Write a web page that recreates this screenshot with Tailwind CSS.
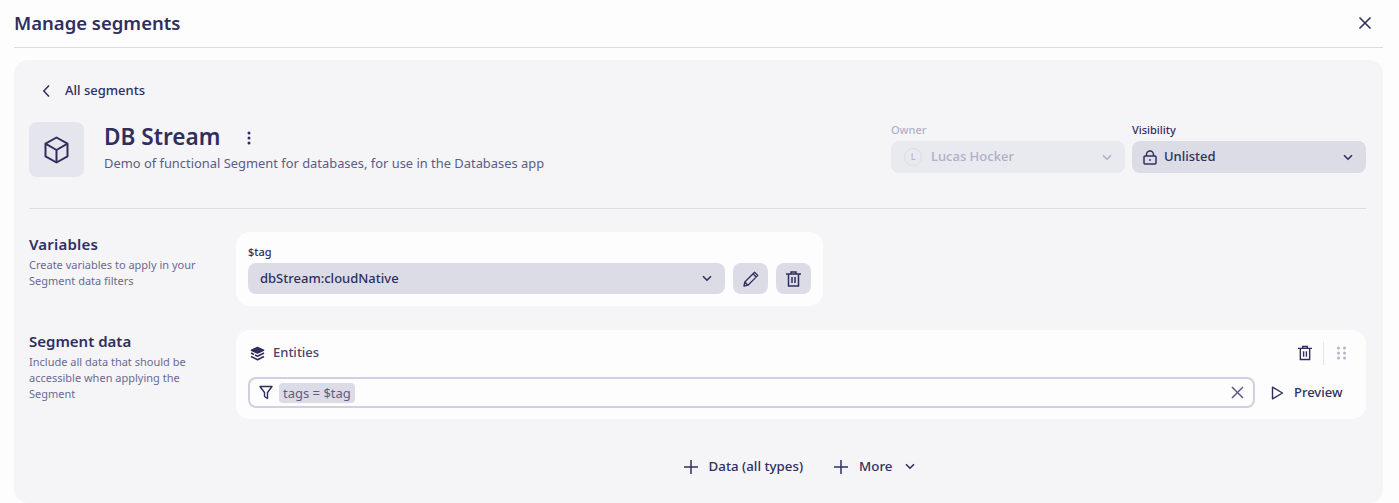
<!DOCTYPE html>
<html lang="en">
<head>
  <meta charset="UTF-8" />
  <title>Manage segments</title>
  <script src="https://cdn.jsdelivr.net/npm/@tailwindcss/browser@4"></script>
</head>
<body class="bg-[#fdfdfe] text-[#2f2f5f] font-['Noto_Sans',sans-serif] h-[503px] w-[1399px] overflow-hidden">

  <!-- Title bar -->
  <header class="mx-[14px] w-[1369px] h-[48px] border-b border-[#dcdce8] flex items-center justify-between">
    <h1 class="text-[18.5px] font-semibold -mt-[1px]">Manage segments</h1>
    <button class="mr-[10px] -mt-[1px]">
      <svg class="w-[16px] h-[16px]" viewBox="0 0 16 16" fill="none" stroke="currentColor" stroke-width="1.6"><path d="M2.5 2.5l11 11M13.5 2.5l-11 11" /></svg>
    </button>
  </header>

  <main class="mt-[12px] mx-[14px] w-[1369px] h-[443px] bg-[#f5f5f8] rounded-[14px] pl-[15px] pr-[17px]">
    <a class="flex items-center gap-[14px] pt-[20px] pl-[13px] h-[42px] text-[13px] font-medium">
      <svg class="w-[9px] h-[14px]" viewBox="0 0 9 14" fill="none" stroke="currentColor" stroke-width="1.5"><path d="M7 1.5L1.8 7L7 12.5" /></svg>
      All segments
    </a>

    <!-- Segment header -->
    <section class="flex justify-between mt-[20px] h-[84px]">
      <div class="flex">
        <div class="w-[55px] h-[55px] rounded-[8px] bg-[#e5e5ed] flex items-center justify-center">
          <svg class="w-[25px] h-[28px]" viewBox="0 0 25 28" fill="none" stroke="currentColor" stroke-width="2" stroke-linejoin="round"><path d="M12.500 1.500l11 6.200v12.600l-11 6.200-11-6.200V7.700z" /><path d="M1.500 7.700l11 6.300 11-6.300M12.500 14v12.500" /></svg>
        </div>
        <div class="ml-[20px]">
          <div class="flex items-center h-[30px]">
            <h2 class="text-[22.6px] font-semibold leading-none">DB Stream</h2>
            <svg class="ml-[27px] mt-[1px] w-[4px] h-[14px]" viewBox="0 0 4 14" fill="currentColor"><circle cx="2" cy="2" r="1.5" /><circle cx="2" cy="7" r="1.5" /><circle cx="2" cy="12" r="1.5" /></svg>
          </div>
          <p class="mt-[2px] text-[12.9px] leading-[18px] text-[#5c5c85]">Demo of functional Segment for databases, for use in the Databases app</p>
        </div>
      </div>

      <div class="flex gap-[7px] pt-[1px]">
        <div class="w-[234px]">
          <div class="text-[11px] leading-[14px] font-medium text-[#b0b0c6]">Owner</div>
          <div class="mt-[4px] h-[32px] rounded-[8px] bg-[#e9e9f0] flex items-center pl-[13px] pr-[13px] text-[#afafc7]">
            <span class="w-[18px] h-[18px] rounded-full border border-[#dcdce6] text-[9px] flex items-center justify-center">L</span>
            <span class="ml-[9px] text-[13px] font-medium">Lucas Hocker</span>
            <svg class="ml-auto w-[10px] h-[7px]" viewBox="0 0 10 7" fill="none" stroke="currentColor" stroke-width="1.6"><path d="M1 1.2l4 4 4-4" /></svg>
          </div>
        </div>
        <div class="w-[234px]">
          <div class="text-[11px] leading-[14px] font-medium">Visibility</div>
          <div class="mt-[4px] h-[32px] rounded-[8px] bg-[#dcdce6] flex items-center pl-[11px] pr-[13px]">
            <svg class="w-[14px] h-[15px]" viewBox="0 0 14 15" fill="none" stroke="currentColor" stroke-width="1.5"><path d="M3.500 6V4.500a3.500 3.500 0 0 1 7 0V6" /><rect x="1" y="6" width="12" height="8" rx="1" /><circle cx="7" cy="10" r="0.9" fill="currentColor" stroke="none" /></svg>
            <span class="ml-[7px] text-[13px] font-medium">Unlisted</span>
            <svg class="ml-auto w-[10px] h-[7px]" viewBox="0 0 10 7" fill="none" stroke="currentColor" stroke-width="1.6"><path d="M1 1.200l4 4 4-4" /></svg>
          </div>
        </div>
      </div>
    </section>

    <div class="mt-[2px] border-t border-[#dcdce8]"></div>

    <!-- Variables -->
    <section class="flex mt-[23px]">
      <div class="w-[207px]">
        <h3 class="text-[15px] tracking-[0.2px] leading-[20px] font-semibold mt-[2px]">Variables</h3>
        <p class="mt-[3px] text-[11px] leading-[16px] text-[#6a6a90]">Create variables to apply in your<br />Segment data filters</p>
      </div>
      <div class="w-[587px] h-[74px] bg-[#fdfdfe] rounded-[14px] px-[12px] pt-[13px]">
        <div class="text-[11px] leading-[14px] font-medium">$tag</div>
        <div class="mt-[4px] flex gap-[8px]">
          <div class="w-[477px] h-[31px] rounded-[8px] bg-[#dcdce6] flex items-center pl-[12px] pr-[13px]">
            <span class="text-[13px] font-medium">dbStream:cloudNative</span>
            <svg class="ml-auto w-[10px] h-[7px]" viewBox="0 0 10 7" fill="none" stroke="currentColor" stroke-width="1.6"><path d="M1 1.200l4 4 4-4" /></svg>
          </div>
          <div class="w-[35px] h-[31px] rounded-[8px] bg-[#dcdce6] flex items-center justify-center">
            <svg class="w-[16px] h-[16px]" viewBox="0 0 16 16" fill="none" stroke="currentColor" stroke-width="1.3" stroke-linejoin="round"><path d="M1 15l.8-4L11.600 1.200l3.200 3.200L5 14.200zM10 2.800l3.200 3.200M1.800 11l3.200 3.200" /></svg>
          </div>
          <div class="w-[35px] h-[31px] rounded-[8px] bg-[#dcdce6] flex items-center justify-center">
            <svg class="w-[15px] h-[16px]" viewBox="0 0 15 16" fill="none" stroke="currentColor" stroke-width="1.5"><path d="M0 3h15M5 3V1h5v2M2.500 3v12h10V3M6 6v6M9 6v6" /></svg>
          </div>
        </div>
      </div>
    </section>

    <!-- Segment data -->
    <section class="flex mt-[24px]">
      <div class="w-[207px]">
        <h3 class="text-[15px] leading-[20px] font-semibold mt-[1px]">Segment data</h3>
        <p class="mt-[3px] text-[11px] leading-[16px] text-[#6a6a90]">Include all data that should be<br />accessible when applying the<br />Segment</p>
      </div>
      <div class="w-[1130px] h-[89px] bg-[#fdfdfe] rounded-[14px] pl-[12px] pr-[20px]">
        <div class="flex items-center h-[47px] pb-[1px]">
          <svg class="ml-[2px] w-[15px] h-[15px]" viewBox="0 0 15 15" fill="none" stroke="currentColor" stroke-width="1.600" stroke-linejoin="round"><path d="M7.500 1.500L13.500 4.200 7.500 7 1.500 4.200z" fill="currentColor" /><path d="M1 7l3 1.500M14 7l-6.500 3.200L5 9M1 10.500l6.500 3.200L14 10.500" /></svg>
          <span class="ml-[8px] text-[13px] text-[#45456f] font-medium">Entities</span>
          <svg class="ml-auto w-[14px] h-[16px]" viewBox="0 0 15 16" fill="none" stroke="currentColor" stroke-width="1.500"><path d="M0 3h15M5 3V1h5v2M2.500 3v12h10V3M6 6v6M9 6v6" /></svg>
          <span class="ml-[11px] w-px h-[23px] bg-[#e4e4ec]"></span>
          <svg class="ml-[13px] w-[9px] h-[14px]" viewBox="0 0 9 14" fill="#b4b4ca"><circle cx="1.500" cy="2" r="1.500" /><circle cx="7.500" cy="2" r="1.500" /><circle cx="1.500" cy="7" r="1.500" /><circle cx="7.500" cy="7" r="1.500" /><circle cx="1.500" cy="12" r="1.500" /><circle cx="7.500" cy="12" r="1.500" /></svg>
        </div>
        <div class="flex items-center">
          <div class="w-[1007px] h-[31px] rounded-[8px] border-2 border-[#d0d0e0] flex items-center pl-[9px] pr-[9px]">
            <svg class="w-[14px] h-[15px]" viewBox="0 0 14 15" fill="none" stroke="currentColor" stroke-width="1.400" stroke-linejoin="round"><path d="M1 1.500h12L8.500 7.500v6l-3-2v-4z" /></svg>
            <span class="ml-[6px] h-[20px] px-[4px] rounded-[4px] bg-[#dcdce6] text-[13px] leading-[20px] text-[#5c5c85]">tags = $tag</span>
            <svg class="ml-auto w-[13px] h-[13px] text-[#5c5c85]" viewBox="0 0 13 13" fill="none" stroke="currentColor" stroke-width="1.500"><path d="M1 1l11 11M12 1L1 12" /></svg>
          </div>
          <svg class="ml-[16px] w-[13px] h-[14px]" viewBox="0 0 13 14" fill="none" stroke="currentColor" stroke-width="1.400" stroke-linejoin="round"><path d="M1.500 1.200L11.500 7l-10 5.800z" /></svg>
          <span class="ml-[10px] text-[13px] font-medium">Preview</span>
        </div>
      </div>
    </section>

    <!-- Add actions -->
    <div class="mt-[38px] flex justify-center items-center text-[13.3px] font-medium pl-[204px]">
      <svg class="w-[14px] h-[14px]" viewBox="0 0 14 14" fill="none" stroke="currentColor" stroke-width="1.500"><path d="M7 0v14M0 7h14" /></svg>
      <span class="ml-[11px]">Data (all types)</span>
      <svg class="ml-[31px] w-[14px] h-[14px]" viewBox="0 0 14 14" fill="none" stroke="currentColor" stroke-width="1.500"><path d="M7 0v14M0 7h14" /></svg>
      <span class="ml-[11px]">More</span>
      <svg class="ml-[13px] w-[10px] h-[7px]" viewBox="0 0 10 7" fill="none" stroke="currentColor" stroke-width="1.600"><path d="M1 1.200l4 4 4-4" /></svg>
    </div>
  </main>

</body>
</html>
